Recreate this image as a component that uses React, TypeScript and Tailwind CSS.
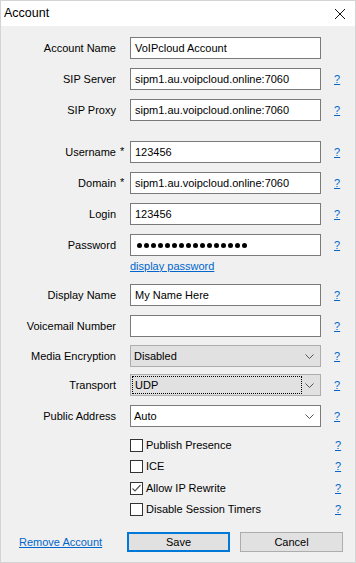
import React from 'react'

const font = { fontFamily: '"Liberation Sans", Arial, sans-serif' }

function Help() {
  return <a className="text-[#0066cc] underline text-[11px] leading-none ml-[13px]">?</a>
}

function Row({ label, req, mt, children, help = true }: { label: string; req?: boolean; mt: string; children: React.ReactNode; help?: boolean }) {
  return (
    <div className={`flex items-center h-[22px] ${mt}`}>
      <div className="w-[115px] text-right text-[11px] text-black relative">
        {label}
        {req && <span className="absolute left-[119px] top-[-1px] text-[11px]">*</span>}
      </div>
      <div className="ml-[14px] w-[191px] h-[22px]">{children}</div>
      {help && <Help />}
    </div>
  )
}

function TextBox({ value }: { value: string }) {
  return (
    <div className="w-full h-full bg-white border border-[#7a7a7a] flex items-center pl-[4px] text-[11px] text-black">
      {value}
    </div>
  )
}

function Chevron() {
  return (
    <svg width="9" height="5" viewBox="0 0 9 5" className="mr-[6px]">
      <path d="M0.5 0.5 L4.5 4.5 L8.5 0.5" fill="none" stroke="#555" strokeWidth="1" />
    </svg>
  )
}

function Select({ value, focus, white }: { value: string; focus?: boolean; white?: boolean }) {
  return (
    <div className={`w-full h-full border flex items-center justify-between text-[11px] text-black ${white ? 'bg-white border-[#7a7a7a]' : 'bg-[#e1e1e1] border-[#adadad]'}`}>
      {focus ? (
        <div className="ml-[1px] h-[18px] w-[170px] border border-dotted border-black flex items-center pl-[2px]">{value}</div>
      ) : (
        <span className="pl-[3px]">{value}</span>
      )}
      <Chevron />
    </div>
  )
}

function Check({ label, checked, mt }: { label: string; checked?: boolean; mt: string }) {
  return (
    <div className={`flex items-center h-[13px] ${mt}`}>
      <div className="w-[129px]" />
      <div className="w-[13px] h-[13px] border border-[#333] bg-white flex items-center justify-center">
        {checked && (
          <svg width="11" height="11" viewBox="0 0 11 11">
            <path d="M1.5 5.5 L4 8 L9.5 2" fill="none" stroke="#555" strokeWidth="1.2" />
          </svg>
        )}
      </div>
      <span className="ml-[3px] text-[11px] text-black w-[176px]">{label}</span>
      <Help />
    </div>
  )
}

export default function App() {
  return (
    <div className="w-[356px] h-[563px] border border-[#d4d4d4] bg-[#f0f0f0] flex flex-col overflow-hidden" style={font}>
      {/* title bar */}
      <div className="h-[25px] bg-white flex items-center justify-between shrink-0">
        <span className="pl-[3px] text-[12.5px] text-black">Account</span>
        <svg width="12" height="12" viewBox="0 0 12 12" className="mr-[9px]">
          <path d="M1 1 L11 11 M11 1 L1 11" stroke="#111" strokeWidth="1" />
        </svg>
      </div>

      <Row label="Account Name" mt="mt-[11px]" help={false}><TextBox value="VoIPcloud Account" /></Row>
      <Row label="SIP Server" mt="mt-[9px]"><TextBox value="sipm1.au.voipcloud.online:7060" /></Row>
      <Row label="SIP Proxy" mt="mt-[9px]"><TextBox value="sipm1.au.voipcloud.online:7060" /></Row>

      <Row label="Username" req mt="mt-[20px]"><TextBox value="123456" /></Row>
      <Row label="Domain" req mt="mt-[9px]"><TextBox value="sipm1.au.voipcloud.online:7060" /></Row>
      <Row label="Login" mt="mt-[9px]"><TextBox value="123456" /></Row>
      <Row label="Password" mt="mt-[9px]">
        <div className="w-full h-full bg-white border border-[#7a7a7a] flex items-center pl-[6px] gap-[2px]">
          {Array.from({ length: 16 }).map((_, i) => (
            <span key={i} className="w-[5px] h-[5px] rounded-full bg-black" />
          ))}
        </div>
      </Row>
      <div className="h-[14px] mt-[3px] pl-[129px] flex items-center">
        <a className="text-[11px] text-[#0066cc] underline">display password</a>
      </div>

      <Row label="Display Name" mt="mt-[11px]"><TextBox value="My Name Here" /></Row>
      <Row label="Voicemail Number" mt="mt-[9px]"><TextBox value="" /></Row>
      <Row label="Media Encryption" mt="mt-[8px]"><Select value="Disabled" /></Row>
      <Row label="Transport" mt="mt-[7px]"><Select value="UDP" focus /></Row>
      <Row label="Public Address" mt="mt-[9px]"><Select value="Auto" white /></Row>

      <Check label="Publish Presence" mt="mt-[12px]" />
      <Check label="ICE" mt="mt-[8px]" />
      <Check label="Allow IP Rewrite" checked mt="mt-[9px]" />
      <Check label="Disable Session Timers" mt="mt-[8px]" />

      <div className="flex items-center mt-[16px] h-[20px]">
        <a className="ml-[18px] w-[108px] text-[11px] text-[#0066cc] underline">Remove Account</a>
        <button className="w-[103px] h-[20px] border-2 border-[#0078d7] bg-[#e1e1e1] text-[11px] text-black">Save</button>
        <button className="ml-[10px] w-[103px] h-[20px] border border-[#adadad] bg-[#e1e1e1] text-[11px] text-black">Cancel</button>
      </div>
    </div>
  )
}
